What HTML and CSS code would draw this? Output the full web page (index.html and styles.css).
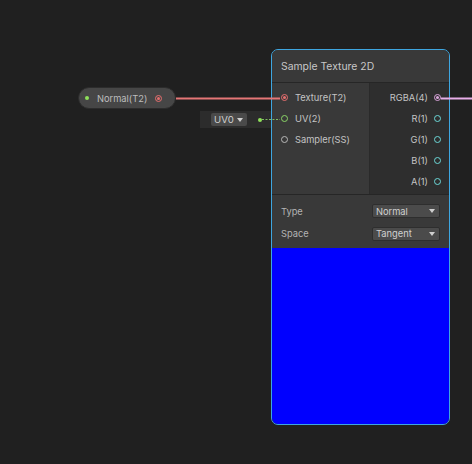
FILE: index.html
```html
<!DOCTYPE html>
<html>
<head>
<meta charset="utf-8">
<link rel="stylesheet" href="styles.css">
</head>
<body>
<div class="canvas">
  <div class="prop-node">
    <span class="dot dot-green"></span>
    <span class="prop-label">Normal(T2)</span>
    <span class="port port-red port-filled"></span>
  </div>

  <div class="uv-panel">
    <div class="uv-drop"><span>UV0</span><span class="caret"></span></div>
    <span class="dot dot-green small"></span>
  </div>

  <div class="node">
    <div class="node-header">Sample Texture 2D</div>
    <div class="ports">
      <div class="inputs">
        <div class="port-row"><span class="port port-red port-filled"></span><span>Texture(T2)</span></div>
        <div class="port-row"><span class="port port-green"></span><span>UV(2)</span></div>
        <div class="port-row"><span class="port port-grey"></span><span>Sampler(SS)</span></div>
      </div>
      <div class="outputs">
        <div class="port-row out"><span>RGBA(4)</span><span class="port port-pink port-filled"></span></div>
        <div class="port-row out"><span>R(1)</span><span class="port port-cyan"></span></div>
        <div class="port-row out"><span>G(1)</span><span class="port port-cyan"></span></div>
        <div class="port-row out"><span>B(1)</span><span class="port port-cyan"></span></div>
        <div class="port-row out"><span>A(1)</span><span class="port port-cyan"></span></div>
      </div>
    </div>
    <div class="settings">
      <div class="setting-row"><span class="setting-label">Type</span><div class="dropdown"><span>Normal</span><span class="caret"></span></div></div>
      <div class="setting-row"><span class="setting-label">Space</span><div class="dropdown"><span>Tangent</span><span class="caret"></span></div></div>
    </div>
    <div class="preview"></div>
  </div>

  <svg class="wires" width="472" height="464" viewBox="0 0 472 464">
    <line x1="176" y1="98.5" x2="280" y2="98.5" stroke="#e57676" stroke-width="2"/>
    <line x1="441" y1="98.5" x2="472" y2="98.5" stroke="#e8aee8" stroke-width="2"/>
    <line x1="262" y1="119.5" x2="280" y2="119.5" stroke="#7fbf5f" stroke-width="1" stroke-dasharray="2 1.5"/>
  </svg>
</div>
</body>
</html>
```
FILE: styles.css
```css
html, body {
  margin: 0;
  padding: 0;
  background: #202020;
}
body {
  font-family: "Inter", "Liberation Sans", sans-serif;
  font-size: 9.3px;
  color: #c4c4c4;
}
.canvas {
  position: relative;
  width: 472px;
  height: 464px;
  overflow: hidden;
}
.wires {
  position: absolute;
  left: 0;
  top: 0;
  pointer-events: none;
}
.prop-node {
  position: absolute;
  left: 78px;
  top: 87px;
  width: 98px;
  height: 22px;
  box-sizing: border-box;
  border-radius: 11px;
  background: #464646;
  border: 1px solid #2c2c2c;
  display: flex;
  align-items: center;
  padding-left: 6px;
}
.prop-label {
  margin-left: 8px;
  color: #bdbdbd;
}
.prop-node .port {
  margin-left: 8px;
}
.dot {
  display: inline-block;
  width: 4px;
  height: 4px;
  border-radius: 50%;
}
.dot-green { background: #8ee05a; }
.uv-panel {
  position: absolute;
  left: 200px;
  top: 111px;
  width: 71px;
  height: 17px;
  background: #2c2c2c;
  display: flex;
  align-items: center;
  box-sizing: border-box;
  padding-left: 11px;
}
.uv-drop {
  width: 36px;
  height: 13px;
  box-sizing: border-box;
  background: #4a4a4a;
  border-radius: 2px;
  display: flex;
  align-items: center;
  justify-content: space-between;
  padding: 0 4px 0 3px;
  color: #cfcfcf;
  font-size: 9.6px;
}
.uv-panel .dot {
  margin-left: 11px;
}
.caret {
  width: 0;
  height: 0;
  border-left: 3.5px solid transparent;
  border-right: 3.5px solid transparent;
  border-top: 4px solid #cfcfcf;
}
.node {
  position: absolute;
  left: 271px;
  top: 49px;
  width: 179px;
  height: 376px;
  box-sizing: border-box;
  border: 1px solid #3ea6e0;
  border-radius: 7px;
  background: #393939;
  display: flex;
  flex-direction: column;
  overflow: hidden;
}
.node-header {
  height: 33px;
  flex: none;
  box-sizing: border-box;
  padding-left: 9px;
  display: flex;
  align-items: center;
  font-size: 10.4px;
  color: #c8c8c8;
  background: #393939;
  border-bottom: 1px solid #262626;
}
.ports {
  display: flex;
  height: 111px;
  flex: none;
  border-bottom: 1px solid #262626;
}
.inputs {
  width: 97px;
  background: #393939;
  padding-top: 4px;
  box-sizing: border-box;
}
.outputs {
  flex: 1;
  background: #2e2e2e;
  padding-top: 4px;
  box-sizing: border-box;
  border-left: 1px solid #2a2a2a;
}
.port-row {
  height: 21px;
  display: flex;
  align-items: center;
  gap: 7px;
  padding-left: 9px;
}
.port-row.out {
  justify-content: flex-end;
  padding-left: 0;
  padding-right: 8px;
  gap: 6px;
}
.port {
  display: inline-block;
  width: 7px;
  height: 7px;
  border-radius: 50%;
  box-sizing: border-box;
  border: 1px solid;
  position: relative;
  flex: none;
}
.port-filled::after {
  content: "";
  position: absolute;
  left: 1px;
  top: 1px;
  width: 3px;
  height: 3px;
  border-radius: 50%;
  background: currentColor;
}
.port-red { color: #e56e6e; border-color: #e56e6e; }
.port-green { border-color: #8ad466; }
.port-grey { border-color: #b8b8b8; }
.port-cyan { border-color: #6cd8d8; }
.port-pink { color: #d9a4db; border-color: #d9a4db; }
.settings {
  height: 53px;
  flex: none;
  background: #393939;
  padding-top: 5px;
  box-sizing: border-box;
}
.setting-row {
  height: 22.5px;
  display: flex;
  align-items: center;
  justify-content: space-between;
  padding-left: 9px;
  padding-right: 9px;
}
.setting-label {
  color: #b4b4b4;
}
.dropdown {
  width: 68px;
  height: 14px;
  box-sizing: border-box;
  background: #4b4b4b;
  border: 1px solid #2e2e2e;
  border-radius: 2px;
  display: flex;
  align-items: center;
  justify-content: space-between;
  padding: 0 4px 0 3px;
  color: #d0d0d0;
}
.preview {
  flex: 1;
  background: #0000ff;
}
```
